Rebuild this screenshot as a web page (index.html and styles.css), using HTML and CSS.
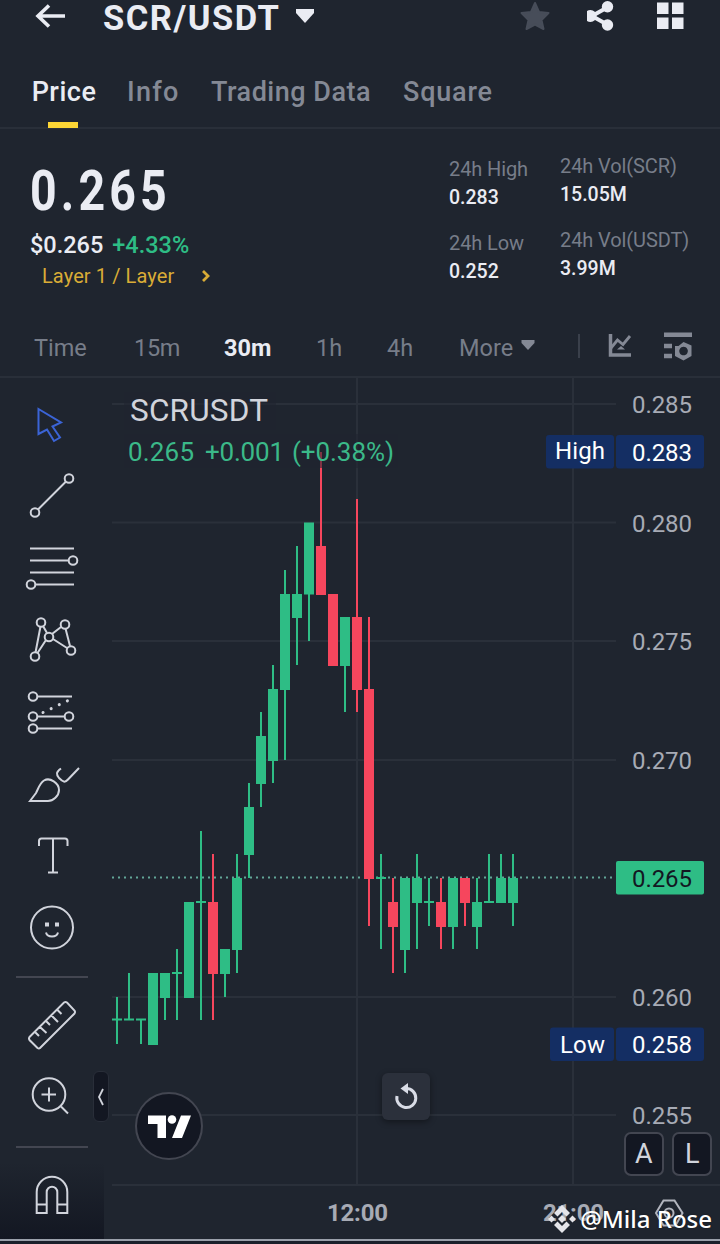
FILE: index.html
```html
<!DOCTYPE html>
<html lang="en">
<head>
<meta charset="utf-8">
<title>SCR/USDT</title>
<link rel="stylesheet" href="styles.css">
</head>
<body>
<div class="app">
  <header class="topbar">
    <svg class="back" width="32" height="24" viewBox="0 0 32 24"><path d="M30 12H3M14 1.500L3 12L14 22.500" fill="none" stroke="#eaecf3" stroke-width="3.600"/></svg>
    <h1 class="pair">SCR/USDT</h1>
    <svg class="caret" width="20" height="16" viewBox="0 0 20 16"><path d="M1 1H19V5L10 15L1 5Z" fill="#eaecf3"/></svg>
    <div class="actions">
      <svg width="32" height="34" viewBox="0 0 32 34"><path d="M16 3L20 12L29.500 13L22.500 20L24.500 29L16 24.500L7.500 29L9.500 20L2.500 13L12 12Z" fill="#474d59" stroke="#474d59" stroke-width="2" stroke-linejoin="round"/></svg>
      <svg width="32" height="34" viewBox="3 0 32 34"><path d="M24 7L8 16L24 25" fill="none" stroke="#eaecf3" stroke-width="4"/><circle cx="23.500" cy="6.700" r="5.700" fill="#eaecf3"/><circle cx="7" cy="16" r="6" fill="#eaecf3" transform="translate(-.5 0)"/><circle cx="23.500" cy="25" r="5.700" fill="#eaecf3"/></svg>
      <svg width="32" height="34" viewBox="0 0 32 34"><path d="M3 2.500H14.500V14H3ZM18 2.500H29.500V14H18ZM3 17.500H14.500V29H3ZM18 17.500H29.500V29H18Z" fill="#eaecf3"/></svg>
    </div>
  </header>
  <nav class="tabs">
    <span class="tab tab-active">Price</span><span class="tab tab-info">Info</span><span class="tab tab-data">Trading Data</span><span class="tab tab-square">Square</span>
  </nav>
  <section class="summary">
    <div class="quote">
      <div class="last">0.265</div>
      <div class="change"><span>$0.265</span><span class="up">+4.33%</span></div>
      <div class="tag"><span>Layer 1 / Layer</span><svg width="10" height="14" viewBox="0 0 10 14"><path d="M2 2L7 7L2 12" fill="none" stroke="#d9ac36" stroke-width="2.800"/></svg></div>
    </div>
    <dl class="stats stats-range">
      <dt>24h High</dt><dd>0.283</dd><dt>24h Low</dt><dd>0.252</dd>
    </dl>
    <dl class="stats stats-volume">
      <dt>24h Vol(SCR)</dt><dd>15.05M</dd><dt>24h Vol(USDT)</dt><dd>3.99M</dd>
    </dl>
  </section>
  <nav class="intervals">
    <span class="iv iv-time">Time</span><span class="iv iv-15">15m</span><span class="iv iv-30">30m</span><span class="iv iv-1h">1h</span><span class="iv iv-4h">4h</span><span class="iv iv-more">More</span>
    <svg class="more-caret" width="14" height="12" viewBox="0 0 14 12"><path d="M.5 1H13.500V4L7 11L.5 4Z" fill="#848995"/></svg>
    <svg class="tools" width="142" height="50" viewBox="578 322 142 50">
      <path d="M579 334V358" stroke="#3a404b" stroke-width="2"/>
      <path d="M610.500 334V355H631" fill="none" stroke="#848995" stroke-width="3.500"/>
      <path d="M611 348L617.500 340L623 344.500L630 336" fill="none" stroke="#848995" stroke-width="2.800"/><path d="M617 349.500L621 346L625 349.500Z" fill="#848995"/>
      <path d="M664 334.800H692M664 346H672M664 356H672" stroke="#848995" stroke-width="4.500"/>
      <path fill-rule="evenodd" d="M678.500 346L683.500 342L691.500 345.500V356L683.500 360.500L675 356V346ZM683.500 346.700A4.300 4.300 0 1 0 683.600 346.700Z" fill="#848995"/>
    </svg>
  </nav>
  <main class="workspace">
    <aside class="drawbar">
      <svg class="tool" viewBox="0 389 104 72"><path d="M38.500 409L61 422.500L52.500 426.500L60 437.500L54 441L47 429.500L38.500 434Z" fill="none" stroke="#3b64d6" stroke-width="2"/></svg>
      <svg class="tool" viewBox="0 461 104 72"><path d="M38 509.500L66 481.500"/><circle cx="35" cy="512.500" r="4.300"/><circle cx="69" cy="478.500" r="4.300"/></svg>
      <svg class="tool" viewBox="0 533 104 72"><path d="M30 548.500H74M30 560.500H69M30 572.500H74M35 584.500H74"/><circle cx="73" cy="560.500" r="4.300"/><circle cx="31" cy="584.500" r="4.300"/></svg>
      <svg class="tool" viewBox="0 605 104 72"><path d="M40.500 626.500L35.500 652.500M43 626L47 633M52 634L61 627M65.500 628.500L70 646M53 639L67 648M46 640L37.500 653"/><circle cx="41" cy="622.500" r="4.300"/><circle cx="65" cy="624.500" r="4.300"/><circle cx="49" cy="637" r="4.300"/><circle cx="71" cy="650.500" r="4.300"/><circle cx="35" cy="656.500" r="4.300"/></svg>
      <svg class="tool" viewBox="0 677 104 72"><path d="M37 696.500H72M37 716.500H65M37 728.500H72"/><circle cx="33" cy="696.500" r="4.300"/><circle cx="33" cy="716.500" r="4.300"/><circle cx="69" cy="716.500" r="4.300"/><circle cx="33" cy="728.500" r="4.300"/><path class="dots" d="M43 712.500L68 700.500"/></svg>
      <svg class="tool" viewBox="0 749 104 72"><path d="M30 801L36 793C39 787 40 783 44 780.500C50 777 59 783 59 790C59 796 53 801 48 801ZM61 768.500C56 772 56 774 59 778C63 782 65 783 68 779.500L79 768"/></svg>
      <svg class="tool" viewBox="0 821 104 72"><path d="M39 846V841Q39 838.500 41.500 838.500H65Q67.500 838.500 67.500 841V846M53 838.500V872.500M48 872.500H58"/></svg>
      <svg class="tool" viewBox="0 893 104 72"><circle cx="52" cy="927.500" r="21"/><path d="M46 932.500Q47 936.500 52 936.500Q57 936.500 58 932.500"/><path class="eyes" d="M45 924.500H49M55 924.500H59"/></svg>
      <hr class="rule">
      <svg class="tool" viewBox="0 989 104 72"><path d="M29.500 1037L64 1002.500Q65.500 1001.500 67 1002.500L74.500 1010.500Q75.500 1012 74.500 1013.500L40 1048Q39 1049 37.500 1048L29.500 1040Q28.500 1038.500 29.500 1037ZM35 1032L39 1036M40 1027L46.500 1033M46 1021L50 1025M51.500 1015.500L58 1022M57.500 1010L61.500 1014"/></svg>
      <svg class="tool" viewBox="0 1061 104 72"><circle cx="49" cy="1094.500" r="16.300"/><path d="M41.500 1094.500H56M49 1087.500V1101.500M61 1106.500L68 1113.500"/></svg>
      <hr class="rule rule-low">
      <svg class="tool" viewBox="0 1160 104 72"><path d="M36.700 1213V1192A15.300 15.300 0 0 1 67.300 1192V1213H57.300V1192A5.300 5.300 0 0 0 46.700 1192V1213ZM37 1204.500H47M57 1204.500H67"/></svg>
    </aside>
    <svg class="chart" width="616" height="866" viewBox="104 378 616 866">
      <path class="grid" d="M112 404H616M112 522.500H616M112 641H616M112 760H616M112 997H616M112 1115H616M112 1185H720M357 378V1185M573 378V1185"/>
      <path class="price-line" d="M112 877.500H616"/>
      <path class="wick green" d="M117 997V1044M129 973V1020M141 1020V1044M165 973V1020M177 949V1020M201 831V1020M225 973V997M237 854V973M249 783V878M261 712V807M273 665V783M285 570V760M297 546V665M309 594V641M345 665V712M381 854V949M405 949V973M417 854V949M429 878V926M453 926V949M477 878V949M489 854V902M501 854V878M513 854V926"/>
      <path class="wick red" d="M213 854V1020M321 452V546M357 499V712M369 617V926M393 878V973M441 878V949M465 902V926"/>
      <path class="green body" d="M112 1018.500h10v2h-10zM124 1018.500h10v2h-10zM136 1018.500h10v2h-10zM148 973h10v72h-10zM160 973h10v25h-10zM172 972h10v2h-10zM184 902h10v96h-10zM196 901h10v2h-10zM220 949h10v25h-10zM232 878h10v72h-10zM244 807h10v48h-10zM256 736h10v48h-10zM268 689h10v72h-10zM280 594h10v96h-10zM292 594h10v24h-10zM304 522.500h10v72h-10zM340 617h10v49h-10zM376 877h10v2h-10zM400 878h10v72h-10zM412 878h10v25h-10zM424 901h10v2h-10zM448 878h10v49h-10zM472 902h10v25h-10zM484 901h10v2h-10zM496 878h10v25h-10zM508 878h10v25h-10z"/>
      <path class="red body" d="M208 902h10v72h-10zM316 546h10v49h-10zM328 594h10v72h-10zM352 617h10v73h-10zM364 689h10v190h-10zM388 902h10v25h-10zM436 902h10v25h-10zM460 878h10v25h-10z"/>
      <rect class="legend-bg" x="124" y="392" width="152" height="38"/><rect class="legend-bg" x="124" y="434" width="274" height="34"/>
      <text class="symbol" x="130" y="421" textLength="138">SCRUSDT</text>
      <g class="delta"><text x="128" y="460.500" textLength="66">0.265</text><text x="205" y="460.500" textLength="79">+0.001</text><text x="292" y="460.500" textLength="102">(+0.38%)</text></g>
      <g class="marker">
        <rect x="546" y="435" width="68" height="33.500" rx="3"/><rect x="616" y="435" width="88" height="33.500" rx="3"/>
        <rect x="550" y="1027.500" width="64" height="33.500" rx="3"/><rect x="616" y="1027.500" width="88" height="33.500" rx="3"/>
        <text x="555" y="459" textLength="50">High</text><text x="632" y="461" textLength="60">0.283</text>
        <text x="560" y="1053" textLength="45">Low</text><text x="632" y="1053" textLength="60">0.258</text>
      </g>
      <g class="axis">
        <text x="632" y="413" textLength="60">0.285</text><text x="632" y="532" textLength="60">0.280</text><text x="632" y="650" textLength="60">0.275</text><text x="632" y="769" textLength="60">0.270</text><text x="632" y="1006" textLength="60">0.260</text><text x="632" y="1124" textLength="60">0.255</text>
      </g>
      <rect class="green" x="616" y="861" width="88" height="33.500" rx="2"/><text class="current" x="632" y="887" textLength="60">0.265</text>
      <g class="times"><text x="327" y="1221" textLength="61">12:00</text><text x="543" y="1221" textLength="61">21:00</text></g>
      <circle cx="169" cy="1126" r="33" fill="#131722" stroke="#434651" stroke-width="2"/>
      <path d="M148 1115.500H166V1138H157.500V1124H148ZM181 1115.500H191L182 1138H172Z" fill="#fff"/><circle cx="172" cy="1119.500" r="4.300" fill="#fff"/>
      <g class="reset"><rect x="382" y="1073" width="48" height="47" rx="6" fill="#2b303b"/><path d="M397 1096A9.500 9.500 0 1 0 406 1088.500" fill="none" stroke="#d9dce6" stroke-width="3"/><path d="M408 1083V1094L400.500 1088.500Z" fill="#d9dce6"/></g>
      <g class="mode"><rect x="625" y="1133" width="38" height="42" rx="6"/><rect x="673" y="1133" width="38" height="42" rx="6"/><text x="635" y="1163">A</text><text x="685" y="1163">L</text></g>
      <path d="M663.500 1200.500H674.500L682.500 1213L675.500 1225.500H663.500L656 1213Z" fill="none" stroke="#b2b5be" stroke-width="2"/><circle cx="669" cy="1213" r="4.500" fill="none" stroke="#b2b5be" stroke-width="2"/>
    </svg>
    <button class="collapse" aria-label="Collapse"><svg width="8" height="18" viewBox="0 0 8 18"><path d="M6 1L2 9L6 17" fill="none" stroke="#d1d4dc" stroke-width="1.800"/></svg></button>
    <div class="watermark">
      <svg width="28" height="28" viewBox="0 0 28 28"><path d="M14 0L22 8L18.500 11.500L14 7L9.500 11.500L6 8ZM14 10L18 14L14 18L10 14ZM3.500 10.500L7 14L3.500 17.500L0 14ZM24.500 10.500L28 14L24.500 17.500L21 14ZM9.500 16.500L14 21L18.500 16.500L22 20L14 28L6 20Z" fill="#e4e5ea"/></svg>
      <span>@Mila Rose</span>
    </div>
  </main>
</div>
</body>
</html>
```
FILE: styles.css
```css
* { box-sizing: border-box; }
body { margin: 0; background: #1f252f; font-family: Roboto, "Liberation Sans", sans-serif; color: #eaecf3; }
svg { display: block; flex: none; }
.app { width: 720px; height: 1244px; overflow: hidden; display: flex; flex-direction: column; }

.topbar { height: 34px; display: flex; align-items: center; padding-left: 35px; }
.back { margin-bottom: 3px; }
.pair { margin: 1px 0 0 36px; width: 178px; font-size: 34.5px; line-height: 34px; font-weight: 700; letter-spacing: 1.5px; white-space: nowrap; }
.caret { margin: 0 0 3px 14px; }
.actions { margin-left: auto; padding-right: 34px; display: flex; gap: 35.500px; }

.tabs { height: 95px; border-bottom: 2px solid #292f39; display: flex; padding: 0 0 0 31px; font-size: 27px; line-height: 116px; font-weight: 500; color: #848995; }
.tab { white-space: nowrap; height: 95px; letter-spacing: .5px; }
.tab-active { width: 66px; color: #eaecf3; display: flex; flex-direction: column; align-items: center; }
.tab-active::after { content: ""; width: 30px; height: 6.500px; background: #fcd535; margin-top: -28.500px; margin-right: 2px; flex: none; }
.tab-info { margin-left: 30px; width: 84px; letter-spacing: 1.300px; }
.tab-data { width: 192px; }
.tab-square { letter-spacing: .8px; }

.summary { height: 188px; display: flex; }
.quote { width: 449px; padding: 32px 0 0 30px; white-space: nowrap; }
.last { font-size: 56px; line-height: 60px; font-weight: 700; letter-spacing: 5px; transform: scaleX(.83); transform-origin: left; }
.change { display: flex; gap: 9px; margin-top: 10px; font-size: 23.5px; line-height: 28px; font-weight: 500; }
.up { color: #2ebd85; }
.tag { display: flex; align-items: center; gap: 27px; padding-left: 12px; margin-top: 5px; font-size: 20px; line-height: 24px; letter-spacing: .1px; color: #d9ac36; }
.stats { margin: 0; font-size: 20px; white-space: nowrap; }
.stats dt { color: #777d89; height: 30px; line-height: 30px; letter-spacing: -.1px; }
.stats dd { margin: 0; height: 44px; line-height: 28px; font-size: 19.5px; font-weight: 500; }
.stats-range { width: 111px; padding-top: 25px; }
.stats-volume { padding-top: 22px; }

.intervals { height: 61px; border-bottom: 2px solid #292f39; display: flex; align-items: center; padding-left: 34px; font-size: 23.5px; color: #777d89; }
.iv { white-space: nowrap; padding-top: 2px; }
.iv-time { width: 100px; }
.iv-15 { width: 90px; letter-spacing: -.3px; }
.iv-30 { width: 92px; color: #eaecf3; font-weight: 700; }
.iv-1h { width: 71px; }
.iv-4h { width: 72px; }
.iv-more { width: 62px; }
.more-caret { margin-bottom: 3px; }
.tools { margin-left: auto; }

.workspace { height: 866px; position: relative; display: flex; border-bottom: 4px solid #1b202b; }
.workspace::after { content: ""; position: absolute; left: 0; right: 0; bottom: -1px; height: 2px; background: #9aa0ab; }
.drawbar { width: 104px; flex: none; height: 862px; padding-top: 11px; background: linear-gradient(#1f252f 91%, #131722); }
.chart { margin-left: 0; }
.tool { width: 104px; height: 72px; fill: none; stroke: #d1d4dc; stroke-width: 2; }
.dots { stroke-width: 3; stroke-dasharray: .1 8.900; stroke-linecap: round; }
.eyes { stroke-width: 4; }
.rule { width: 72px; height: 2px; border: 0; background: #434651; margin: 11px 16px; }
.rule-low { margin: 13px 16px 12px; }

.grid { stroke: #2a303a; stroke-width: 2; }
.price-line { stroke: #62a697; stroke-width: 2; stroke-dasharray: 2 4; }
.wick { stroke-width: 2; }
.green { fill: #2ebd85; stroke: #2ebd85; }
.red { fill: #f6465d; stroke: #f6465d; }
.body, rect.green { stroke: none; }
.legend-bg { fill: #1f252f; opacity: .55; }
.symbol { font-size: 31.5px; fill: #d1d4dc; }
.delta { font-size: 26px; fill: #3bb989; }
.axis { font-size: 24px; fill: #a7abb5; }
.marker { font-size: 24px; fill: #fff; }
.marker rect { fill: #142e63; }
.current { font-size: 24px; fill: #131722; }
.times { font-size: 24px; font-weight: 700; fill: #a7abb5; }
.mode { font-size: 27px; fill: #d1d4dc; }
.mode rect { fill: #131722; stroke: #434651; stroke-width: 2; }
.reset { filter: drop-shadow(0 2px 3px rgba(0, 0, 0, .4)); }

.collapse { position: absolute; left: 93px; top: 693px; width: 16px; height: 51px; padding: 0; border: 1px solid #292e39; border-radius: 6px; background: #131722; display: flex; align-items: center; justify-content: center; }
.watermark { position: absolute; right: 8px; bottom: 1px; height: 40px; display: flex; align-items: center; gap: 4px; font: 500 24px/40px "Noto Sans", sans-serif; color: #fff; text-shadow: 0 0 2px rgba(0, 0, 0, .35); white-space: nowrap; }
```
